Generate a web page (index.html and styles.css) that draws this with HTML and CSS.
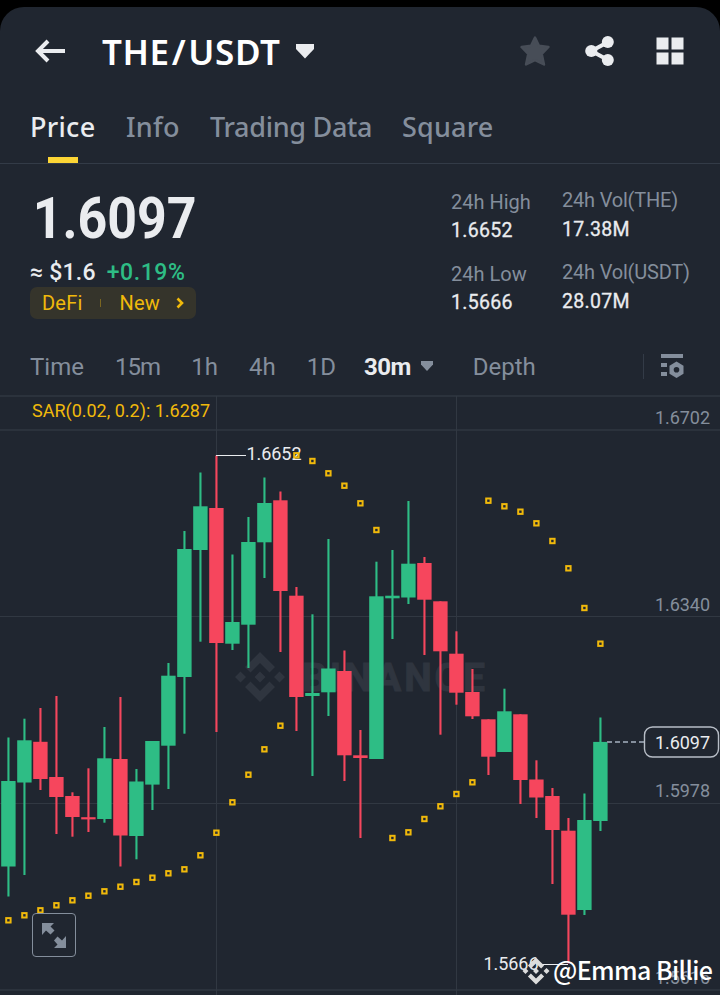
FILE: index.html
```html
<!DOCTYPE html>
<html lang="en">
  <head>
    <meta charset="UTF-8" />
    <meta name="viewport" content="width=device-width, initial-scale=1.0" />
    <title>THE/USDT</title>
    <link rel="stylesheet" href="styles.css">
  </head>
  <body>
    <main class="screen">
      <header>
        <svg class="back" width="30" height="24" viewBox="0 0 30 24">
          <path d="M30 12H3M13 2L3 12L13 22" fill="none" stroke="#eaecef" stroke-width="4" />
        </svg>
        <h1>THE<span>/</span>USDT</h1>
        <svg class="caret" width="18" height="15" viewBox="0 0 18 15">
          <path d="M0 0H18V5L9 14.5L0 5Z" fill="#eaecef" />
        </svg>
        <svg class="star" width="30" height="30" viewBox="0 0 30 30">
          <path d="M15 1.5L19 9.8L28.5 11L21.8 18L24 28.5L15 24.2L6 28.5L8.2 18L1.5 11L11 9.8Z" fill="#474d57" stroke="#474d57" stroke-width="2.4" stroke-linejoin="round" />
        </svg>
        <svg class="share" width="30" height="30" viewBox="0 0 30 30">
          <path d="M23 6L6.5 15L23 24" fill="none" stroke="#eaecef" stroke-width="4" />
          <circle cx="6.3" cy="15" r="6.1" fill="#eaecef" />
          <circle cx="22.8" cy="6" r="6" fill="#eaecef" />
          <circle cx="22.8" cy="24" r="6" fill="#eaecef" />
        </svg>
        <svg class="apps" width="28" height="28" viewBox="0 0 28 28">
          <path d="M.5 .5H12.5V12.5H.5ZM15.500 .5H27.500V12.500H15.500ZM.5 15.500H12.500V27.500H.5ZM15.500 15.500H27.500V27.500H15.500Z" fill="#eaecef" />
        </svg>
      </header>

      <nav class="tabs">
        <a class="active">Price</a>
        <a class="info">Info</a>
        <a class="data">Trading Data</a>
        <a class="square">Square</a>
      </nav>

      <section class="summary">
        <div class="price-box">
          <div class="price">1.6097</div>
          <div class="change"><span>≈ $1.6</span><span class="up">+0.19%</span></div>
          <div class="tags">
            <span>DeFi</span><i></i><span>New</span>
            <svg width="8" height="12" viewBox="0 0 8 12">
              <path d="M1.500 1.500L6 6L1.500 10.500" fill="none" stroke="#f0b90b" stroke-width="2.6" />
            </svg>
          </div>
        </div>
        <dl class="range">
          <dt>24h High</dt>
          <dd>1.6652</dd>
          <dt>24h Low</dt>
          <dd>1.5666</dd>
        </dl>
        <dl class="volume">
          <dt>24h Vol(THE)</dt>
          <dd>17.38M</dd>
          <dt>24h Vol(USDT)</dt>
          <dd>28.07M</dd>
        </dl>
      </section>

      <nav class="intervals">
        <a>Time</a>
        <a class="tight">15m</a>
        <a>1h</a>
        <a>4h</a>
        <a>1D</a>
        <a class="active">30m</a>
        <svg class="more" width="14" height="11" viewBox="0 0 14 11">
          <path d="M1 0H13V3.500L7 10L1 3.500Z" fill="#848e9c" />
        </svg>
        <a class="depth">Depth</a>
        <svg class="settings" width="24" height="25" viewBox="0 0 24 25">
          <path d="M1 0H23V4H1ZM1 9H7V13H1ZM1 18H7V22H1Z" fill="#848e9c" />
          <path d="M16.500 7.500L23.500 11.700V19.700L16.500 24L9.500 19.700V11.700Z" fill="#848e9c" />
          <circle cx="16.500" cy="15.700" r="2.800" fill="#202630" />
        </svg>
      </nav>

      <section class="chart">
        <svg id="chart" width="720" height="600" viewBox="0 395 720 600">
          <g class="grid">
            <path class="thick" d="M0 396H720M0 430H720M0 990H720" />
            <path d="M0 616.500H720M0 803.500H720M216.500 396V995M456.500 396V995" />
          </g>
          <g class="watermark">
            <g transform="translate(260 677)">
              <path d="M0 -25L15 -10L9.500 -4.500L0 -14L-9.500 -4.500L-15 -10ZM0 25L15 10L9.500 4.500L0 14L-9.500 4.500L-15 10ZM0 -5.500L5.500 0L0 5.500L-5.500 0ZM-19.500 -5.500L-14 0L-19.500 5.500L-25 0ZM19.500 -5.500L25 0L19.500 5.500L14 0Z" />
            </g>
            <text x="302" y="691" textLength="183">BINANCE</text>
          </g>
          <g class="axis">
            <text x="655" y="424" textLength="55">1.6702</text>
            <text x="655" y="611" textLength="55">1.6340</text>
            <text x="655" y="797" textLength="55">1.5978</text>
            <text x="655" y="984" textLength="55">1.5616</text>
          </g>
          <text class="sar-label" x="32" y="417" textLength="178">SAR(0.02, 0.2): 1.6287</text>
          <g id="candles"></g>
          <g class="extreme">
            <path d="M216 455.500H246M539 964.500H568" />
            <text x="246.500" y="460" textLength="55">1.6652</text>
            <text x="483.500" y="970" textLength="55">1.5666</text>
          </g>
          <g id="sar"></g>
          <path class="last-line" d="M607 742H644" />
          <rect class="last-box" x="644.500" y="727" width="74" height="30" rx="8" />
          <text class="last-text" x="655" y="749" textLength="55">1.6097</text>
          <g class="author">
            <g transform="translate(536 971) scale(.54)" fill="#dcdcdc">
              <path d="M0 -25L15 -10L9.500 -4.500L0 -14L-9.500 -4.500L-15 -10ZM0 25L15 10L9.500 4.500L0 14L-9.500 4.500L-15 10ZM0 -5.500L5.500 0L0 5.500L-5.500 0ZM-19.500 -5.500L-14 0L-19.500 5.500L-25 0ZM19.500 -5.500L25 0L19.500 5.500L14 0Z" />
            </g>
            <text x="553" y="980" textLength="160">@Emma Billie</text>
          </g>
        </svg>
        <button class="expand" aria-label="Full screen">
          <svg width="24" height="25" viewBox="0 0 24 25">
            <path d="M0 0H12L8.500 3.500L12.500 7.500L8.500 11.500L4 7.500L0 12ZM24 25H12L15.500 21.500L12 17.500L15.500 13.500L20 17.500L24 13Z" fill="#848e9c" />
          </svg>
        </button>
      </section>
    </main>

    <script>
      // high, body top, body bottom, low, 1 = up
      const candles = [
        [737.5, 781, 866.5, 896.5, 1],
        [718.7, 740.3, 782.5, 875, 1],
        [708, 741.8, 779, 790, 0],
        [696, 777, 797, 834, 0],
        [792.3, 796, 817, 836.7, 0],
        [768.3, 817.2, 819.4, 832, 0],
        [727, 758.3, 819, 822.7, 1],
        [697, 759, 835.5, 866.5, 0],
        [769, 781.5, 836, 859.3, 1],
        [741, 741, 784.6, 810, 1],
        [663, 675.7, 745.7, 789, 1],
        [531, 549, 677, 733.7, 1],
        [472.5, 506.3, 550, 641.7, 1],
        [455.5, 508, 643, 732, 0],
        [554.5, 622, 643.7, 650, 1],
        [517, 542, 624.7, 668, 1],
        [477.5, 503, 542.3, 578, 1],
        [491.5, 500.3, 591, 652, 0],
        [587, 595.7, 697, 731, 0],
        [614.3, 693, 696, 776, 1],
        [539, 668.5, 692.3, 716, 1],
        [650.5, 671, 755.3, 781, 0],
        [730, 755.3, 758, 838, 0],
        [561.7, 596.3, 759, 759, 1],
        [550, 595.7, 598.3, 639, 1],
        [501, 563.7, 597.5, 604, 1],
        [557, 563, 599.7, 655, 0],
        [601.3, 601.3, 651.3, 734.7, 0],
        [631.3, 653.7, 692.7, 704.7, 0],
        [669, 692, 716.3, 719, 0],
        [719.3, 719.3, 756.7, 775, 0],
        [688.7, 711.3, 752, 752, 1],
        [714.3, 714.3, 780, 804, 0],
        [760.3, 779.5, 797.5, 818, 0],
        [788, 796, 830, 884, 0],
        [818, 830.7, 914.7, 963.5, 0],
        [793.5, 820, 910, 915, 1],
        [717.5, 741.9, 821, 831, 1]
      ];
      const sar = [
        920.3, 915.3, 910.3, 905.3, 900.3, 895.7, 891.3, 886.7, 882, 877.7, 873.3, 869.3, 855.3,
        832.7, 802.3, 774.7, 749.3, 725.7, 455.3, 461, 473.3, 485.7, 503.3, 530, 838, 832.3,
        819, 806.3, 794, 782.3, 500.7, 506.3, 511.7, 523.3, 541, 568.3, 608, 643.7
      ];
      const step = 16;
      const first = 8.4;

      const addRect = (parent, x, y, width, height, cls) => {
        const rect = document.createElementNS("http://www.w3.org/2000/svg", "rect");
        rect.setAttribute("x", x);
        rect.setAttribute("y", y);
        rect.setAttribute("width", width);
        rect.setAttribute("height", height);
        rect.setAttribute("class", cls);
        parent.appendChild(rect);
      };

      const candleLayer = document.getElementById("candles");
      candles.forEach(([high, top, bottom, low, up], i) => {
        const x = first + i * step;
        const cls = up ? "up" : "down";
        addRect(candleLayer, x - 1, high, 2.1, low - high, cls);
        addRect(candleLayer, x - 7.2, top, 14.4, bottom - top, cls);
      });

      const sarLayer = document.getElementById("sar");
      sar.forEach((y, i) => {
        addRect(sarLayer, first + i * step - 2.2, y - 2.2, 4.4, 4.4, "dot");
      });
    </script>
  </body>
</html>
```
FILE: styles.css
```css
* {
  box-sizing: border-box;
}
body {
  margin: 0;
  padding-top: 7px;
  background: #000;
  font-family: Roboto, "Liberation Sans", sans-serif;
  color: #eaecef;
}
.screen {
  height: 988px;
  background: #202630;
  border-radius: 24px 24px 0 0;
  overflow: hidden;
}
svg {
  display: block;
  flex-shrink: 0;
}
header {
  display: flex;
  align-items: center;
  height: 88px;
  padding: 0 35px;
}
h1 {
  margin: 1px 0 0 37px;
  width: 178px;
  font-family: "Noto Sans", sans-serif;
  font-size: 35px;
  font-weight: 600;
  line-height: 40px;
  letter-spacing: 0.6px;
  color: #fff;
  white-space: nowrap;
}
h1 span {
  margin: 0 2px;
}
.caret {
  margin-left: 16px;
}
.star {
  margin-left: 206px;
}
.share {
  margin-left: 35px;
}
.apps {
  margin-left: 41px;
}

.tabs {
  display: flex;
  height: 69px;
  padding-left: 30px;
  border-bottom: 1px solid #333b47;
  font-family: "Noto Sans", sans-serif;
  font-size: 27px;
  font-weight: 500;
  line-height: 63px;
  color: #848e9c;
  white-space: nowrap;
}
.tabs .active {
  position: relative;
  width: 65px;
  letter-spacing: 0.3px;
  color: #eaecef;
}
.tabs .active::after {
  content: "";
  position: absolute;
  left: 18px;
  bottom: 0;
  width: 30px;
  height: 6px;
  background: #fcd535;
}
.tabs .info {
  width: 54px;
  margin-left: 31px;
  letter-spacing: 0.3px;
}
.tabs .data {
  width: 162px;
  margin-left: 30px;
  letter-spacing: -0.3px;
}
.tabs .square {
  margin-left: 30px;
  letter-spacing: 0.2px;
}

.summary {
  display: flex;
  height: 174px;
  padding: 20px 0 0 30px;
}
.price-box {
  width: 421px;
}
.price {
  height: 70px;
  padding-left: 3px;
  font-size: 57px;
  font-weight: 700;
  line-height: 69px;
  transform: scaleX(0.91);
  transform-origin: 0 0;
}
.change {
  display: flex;
  gap: 11px;
  height: 33px;
  font-size: 23px;
  font-weight: 500;
  line-height: 38px;
  letter-spacing: 0.2px;
}
.change .up {
  letter-spacing: 0.6px;
  color: #2ebd85;
}
.tags {
  display: flex;
  align-items: center;
  width: 166px;
  height: 32px;
  padding-left: 12px;
  border-radius: 7px;
  background: #35342b;
  color: #f0b90b;
  font-size: 20px;
  letter-spacing: 0.2px;
}
.tags i {
  width: 1px;
  height: 8px;
  margin: 0 18px;
  background: #7b6621;
}
.tags svg {
  margin-left: 16px;
}
dl {
  margin: 0;
  font-size: 20px;
  line-height: 28px;
  white-space: nowrap;
}
.range {
  width: 111px;
  padding-top: 4px;
}
.volume {
  padding-top: 2px;
}
.volume dt {
  letter-spacing: -0.2px;
}
dt {
  color: #848e9c;
}
dd {
  margin: 0 0 14px;
  font-size: 19.5px;
  font-weight: 400;
  line-height: 30px;
  letter-spacing: 0.3px;
  -webkit-text-stroke: 0.3px #eaecef;
}
.volume dd {
  margin-bottom: 13px;
  line-height: 31px;
}

.intervals {
  display: flex;
  align-items: center;
  height: 57px;
  padding-left: 30px;
  font-size: 24px;
  color: #848e9c;
}
.intervals a {
  margin-right: 31px;
}
.intervals .tight {
  letter-spacing: -0.9px;
}
.intervals .active {
  margin: 0 9px 0 -3px;
  font-weight: 700;
  letter-spacing: -0.5px;
  color: #eaecef;
}
.intervals .depth {
  margin: 0 auto 0 39px;
}
.settings {
  box-sizing: content-box;
  padding-left: 16px;
  margin-right: 36px;
  border-left: 1px solid #333b47;
}

.chart {
  position: relative;
  font-size: 18px;
}
.grid path {
  fill: none;
  stroke: #313842;
}
.grid .thick {
  stroke: #2b323c;
  stroke-width: 2;
}
.watermark {
  fill: #2f353f;
  font-size: 39px;
  font-weight: 700;
}
.watermark text {
  stroke: #2f353f;
}
.axis {
  fill: #848e9c;
}
.sar-label {
  fill: #f0b90b;
}
#candles .up {
  fill: #2ebd85;
}
#candles .down {
  fill: #f6465d;
}
#sar .dot {
  fill: none;
  stroke: #f0b90b;
  stroke-width: 2;
}
.extreme {
  fill: #eaecef;
}
.extreme path {
  stroke: #eaecef;
}
.last-line {
  stroke: #848e9c;
  stroke-width: 2;
  stroke-dasharray: 5 3;
}
.last-box {
  fill: #202630;
  stroke: #b7bdc6;
  stroke-width: 1.4;
}
.last-text {
  fill: #eaecef;
}
.author {
  fill: #fff;
  font-family: "Noto Sans CJK SC", "Noto Sans", sans-serif;
  font-size: 25px;
  font-weight: 500;
}
.expand {
  position: absolute;
  left: 32px;
  top: 518px;
  display: flex;
  align-items: center;
  justify-content: center;
  width: 44px;
  height: 44px;
  padding: 0;
  border: 1px solid #848e9c;
  border-radius: 4px;
  background: transparent;
}
```
